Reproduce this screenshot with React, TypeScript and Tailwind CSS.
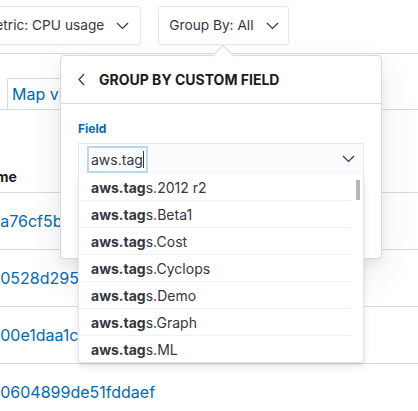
import React from 'react'

// ─── Group-by popover over an instance table ──────────────────────────────────

const font = { fontFamily: 'Inter, "Noto Sans", sans-serif' }

function ChevronDown({ className = '' }: { className?: string }) {
  return (
    <svg width="13" height="8" viewBox="0 0 13 8" className={className} fill="none">
      <path d="M1 1l5.5 5.5L12 1" stroke="#343741" strokeWidth="1.2" />
    </svg>
  )
}

function ChevronLeft() {
  return (
    <svg width="7" height="13" viewBox="0 0 7 13" fill="none">
      <path d="M6 1L1 6.5 6 12" stroke="#343741" strokeWidth="1.2" />
    </svg>
  )
}

const options = ['2012 r2', 'Beta1', 'Cost', 'Cyclops', 'Demo', 'Graph', 'ML']
const rows = ['i-a76cf5b6d21c9e3f0', 'i-0528d2953fa1b0c7e', 'i-00e1daa1c4b8e2f95', 'i-0604899de51fddaef']

export default function App() {
  return (
    <div
      className="relative w-[418px] h-[411px] overflow-hidden bg-white text-[#343741]"
      style={font}
    >
      {/* Top bar */}
      <div className="h-[54px] border-b border-[#d3dae6] flex items-start pt-[6px] gap-[17px] -ml-[29px]">
        <button className="h-[39px] flex items-center gap-[12px] pl-[11px] pr-[11px] border border-[#e3e8f0] rounded-[3px] text-[13.7px] bg-white shadow-[0_1px_2px_rgba(0,0,0,0.04)] whitespace-nowrap">
          Metric: CPU usage
          <ChevronDown />
        </button>
        <button className="h-[39px] flex items-center gap-[13px] pl-[10px] pr-[9px] border border-[#e3e8f0] rounded-[3px] text-[13.7px] bg-white shadow-[0_1px_2px_rgba(0,0,0,0.04)] whitespace-nowrap">
          Group By: All
          <ChevronDown />
        </button>
      </div>

      {/* View tabs */}
      <div className="h-[56px] border-b border-[#d3dae6] flex items-end pl-[7px]">
        <div className="h-[31px] border-t border-l border-[#d3dae6] pl-[4px] flex items-center text-[16px] text-[#006bb4] whitespace-nowrap">
          Map view
        </div>
      </div>

      {/* Table */}
      <div>
        <div className="h-[83px] border-b border-[#d3dae6] flex items-end pb-[5px] -ml-[23px]">
          <span className="text-[14px] font-bold text-[#1a1c21]">Name</span>
        </div>
        {rows.map((id) => (
          <div
            key={id}
            className="h-[57px] border-b border-[#d3dae6] flex items-center text-[16px] text-[#006bb4] whitespace-nowrap"
          >
            <span className="-ml-[11px]">{id}</span>
          </div>
        ))}
      </div>

      {/* Popover */}
      <div className="absolute left-[60px] top-[55px] w-[322px] h-[204px] bg-white border border-[#d3dae6] rounded-[4px] shadow-[0_6px_12px_rgba(0,0,0,0.06),0_16px_40px_rgba(0,0,0,0.08)]">
        <div className="absolute -top-[8px] left-[154px] w-[16px] h-[16px] rotate-45 bg-white border-t border-l border-[#d3dae6]" />
        <div className="relative h-[48px] border-b border-[#d3dae6] flex items-center pl-[17px] gap-[14px]">
          <ChevronLeft />
          <span className="text-[14px] font-bold text-[#1a1c21]">
            GROUP BY CUSTOM FIELD
          </span>
        </div>
        <div className="px-[17px] pt-[16px]">
          <div className="text-[12px] font-bold text-[#006bb4] leading-[18px]">Field</div>
          <div className="mt-[5px] h-[31px] bg-[#fbfcfd] border border-b-0 border-[#e3e8f0] flex items-center pl-[8px] pr-[8px]">
            <div className="h-[27px] border-2 border-[#bcd8ee] flex items-center px-[2px] text-[14px] text-[#343741]">
              aws.tag<span className="w-[1px] h-[17px] bg-[#343741]" />
            </div>
            <ChevronDown className="ml-auto" />
          </div>
          <div className="h-[2px] bg-[#006bb4]" />
        </div>
      </div>

      {/* Combo box options */}
      <div className="absolute left-[78px] top-[174px] w-[286px] h-[189px] bg-white border border-t-0 border-[#e3e8f0] rounded-b-[4px] shadow-[0_4px_8px_rgba(0,0,0,0.08),0_2px_3px_rgba(0,0,0,0.06)]">
        <div className="w-[272px]">
          {options.map((o, i) => (
            <div
              key={o}
              className={`h-[27px] flex items-center pl-[12px] text-[14px] text-[#343741] ${
                i < options.length - 1 ? 'border-b border-[#eef0f3]' : ''
              }`}
            >
              <span className="font-bold">aws.tag</span>
              <span>s.{o}</span>
            </div>
          ))}
        </div>
        <div className="absolute left-[277px] top-[6px] w-[4px] h-[20px] bg-[#b4b6bc]" />
      </div>
    </div>
  )
}
